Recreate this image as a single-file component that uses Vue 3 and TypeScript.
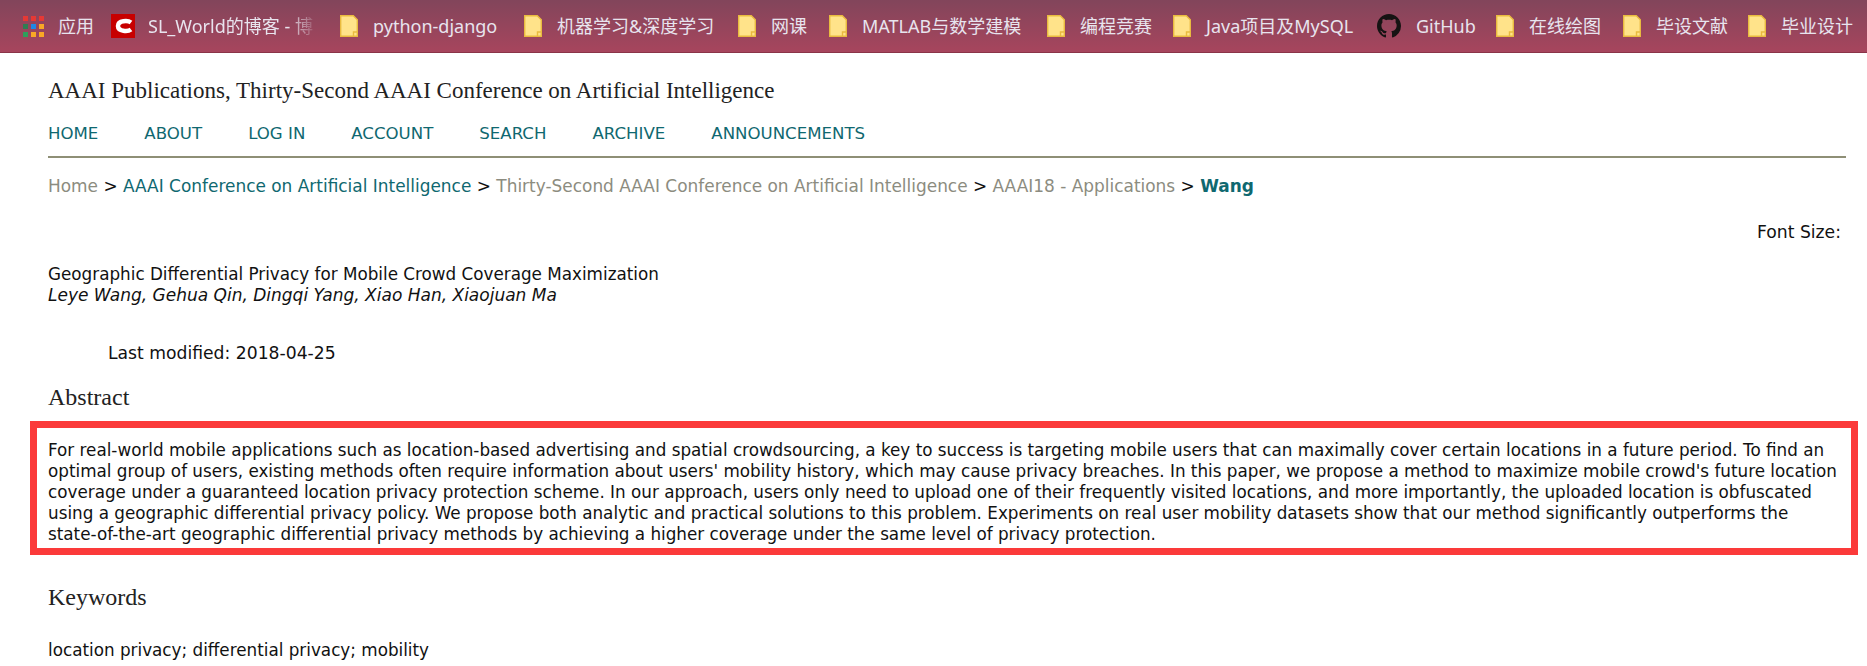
<script setup lang="ts">
interface Bookmark {
  label: string
  icon: 'apps' | 'csdn' | 'folder' | 'github'
  width: number
  faded?: boolean
}

const bookmarks: Bookmark[] = [
  { label: '应用', icon: 'apps', width: 88 },
  { label: 'SL_World的博客 - 博', icon: 'csdn', width: 229, faded: true },
  { label: 'python-django', icon: 'folder', width: 184 },
  { label: '机器学习&深度学习', icon: 'folder', width: 214 },
  { label: '网课', icon: 'folder', width: 91 },
  { label: 'MATLAB与数学建模', icon: 'folder', width: 218 },
  { label: '编程竞赛', icon: 'folder', width: 126 },
  { label: 'Java项目及MySQL', icon: 'folder', width: 204 },
  { label: 'GitHub', icon: 'github', width: 119 },
  { label: '在线绘图', icon: 'folder', width: 127 },
  { label: '毕设文献', icon: 'folder', width: 125 },
  { label: '毕业设计', icon: 'folder', width: 94 }
]

const appColors = ['#e53935', '#e53935', '#e53935', '#2e7d52', '#1e88e5', '#f9a825', '#2e9e5b', '#f9a825', '#f9a825']

const navItems = ['HOME', 'ABOUT', 'LOG IN', 'ACCOUNT', 'SEARCH', 'ARCHIVE', 'ANNOUNCEMENTS']
</script>

<template>
  <div class="page">
    <div class="bookmarks">
      <div
        v-for="b in bookmarks"
        :key="b.label"
        class="bookmark"
        :style="{ width: b.width + 'px' }"
      >
        <span v-if="b.icon === 'apps'" class="apps">
          <i v-for="(c, i) in appColors" :key="i" :style="{ background: c }"></i>
        </span>
        <svg v-else-if="b.icon === 'csdn'" class="icon csdn" width="24" height="24" viewBox="0 0 24 24">
          <rect width="24" height="24" fill="#c70000" />
          <path d="M20 8.500c-3-2.200-13-2.200-13 3.500s10 5.700 13 3.500" fill="none" stroke="#fff" stroke-width="4.500" />
        </svg>
        <svg v-else-if="b.icon === 'folder'" class="icon" width="18" height="22" viewBox="0 0 18 22">
          <path d="M.7.7h12.600l4 4v16.600H.7z" fill="#ffe38a" stroke="#e9bb3f" stroke-width="1.400" />
          <path d="M13.500 21v-4h3.500" fill="#ffe38a" stroke="#e9bb3f" stroke-width="1.400" />
        </svg>
        <svg v-else class="icon" width="24" height="24" viewBox="0 0 16 16">
          <path
            fill="#161313"
            d="M8 0C3.580 0 0 3.580 0 8c0 3.540 2.290 6.530 5.470 7.590.4.070.55-.17.55-.38 0-.19-.01-.82-.01-1.490-2.010.37-2.530-.49-2.690-.94-.09-.23-.48-.94-.82-1.130-.28-.15-.68-.52-.01-.53.630-.01 1.080.58 1.230.82.720 1.210 1.870.87 2.330.66.070-.52.280-.87.510-1.070-1.780-.2-3.640-.89-3.640-3.950 0-.87.310-1.590.82-2.150-.08-.2-.36-1.020.08-2.120 0 0 .67-.21 2.200.82.640-.18 1.320-.27 2-.27s1.360.09 2 .27c1.530-1.040 2.200-.82 2.200-.82.440 1.100.16 1.920.08 2.120.51.560.82 1.270.82 2.150 0 3.070-1.870 3.750-3.650 3.950.29.250.54.730.54 1.480 0 1.070-.01 1.930-.01 2.200 0 .21.150.46.550.38A8.010 8.010 0 0 0 16 8c0-4.420-3.580-8-8-8z"
          />
        </svg>
        <span class="label" :class="{ faded: b.faded }">{{ b.label }}</span>
      </div>
    </div>

    <div class="content">
      <h1 class="site-title">AAAI Publications, Thirty-Second AAAI Conference on Artificial Intelligence</h1>

      <nav class="nav">
        <a v-for="item in navItems" :key="item">{{ item }}</a>
      </nav>

      <div class="crumbs">
        <span class="grey">Home</span> &gt;
        <a>AAAI Conference on Artificial Intelligence</a> &gt;
        <span class="grey">Thirty-Second AAAI Conference on Artificial Intelligence</span> &gt;
        <span class="grey">AAAI18 - Applications</span> &gt;
        <a class="current">Wang</a>
      </div>

      <div class="font-size">Font Size:</div>

      <div class="paper-title">Geographic Differential Privacy for Mobile Crowd Coverage Maximization</div>
      <div class="authors">Leye Wang, Gehua Qin, Dingqi Yang, Xiao Han, Xiaojuan Ma</div>

      <div class="modified">Last modified: 2018-04-25</div>

      <h2 class="heading abstract-heading">Abstract</h2>

      <div class="abstract">
        For real-world mobile applications such as location-based advertising and spatial crowdsourcing, a key to success is targeting mobile users that can maximally cover certain locations in a future period. To find an optimal group of users, existing methods often require information about users' mobility history, which may cause privacy breaches. In this paper, we propose a method to maximize mobile crowd's future location coverage under a guaranteed location privacy protection scheme. In our approach, users only need to upload one of their frequently visited locations, and more importantly, the uploaded location is obfuscated using a geographic differential privacy policy. We propose both analytic and practical solutions to this problem. Experiments on real user mobility datasets show that our method significantly outperforms the <span class="nobreak">state-of-the-art</span> geographic differential privacy methods by achieving a higher coverage under the same level of privacy protection.
      </div>

      <h2 class="heading keywords-heading">Keywords</h2>

      <div class="keywords">location privacy; differential privacy; mobility</div>
    </div>
  </div>
</template>

<style>
html,
body {
  margin: 0;
  background: #fff;
  overflow: hidden;
}
</style>

<style scoped>
.page {
  width: 1867px;
  height: 666px;
  overflow: hidden;
  font-family: 'DejaVu Sans', Verdana, sans-serif;
  font-size: 16.800px;
  line-height: 21px;
  color: #111;
}

.bookmarks {
  height: 53px;
  box-sizing: border-box;
  padding: 0 0 0 23px;
  display: flex;
  align-items: center;
  background: linear-gradient(#82455b, #a7455d);
  border-bottom: 1px solid #8a3448;
}

.bookmark {
  display: flex;
  align-items: center;
  flex: none;
  white-space: nowrap;
}

.icon {
  flex: none;
  margin-right: 15px;
}

.csdn {
  margin-right: 13px;
}

.apps {
  display: grid;
  grid-template-columns: repeat(3, 5px);
  grid-auto-rows: 5px;
  gap: 3px 3px;
  margin-right: 14px;
}

.apps i {
  display: block;
}

.label {
  font-family: 'Noto Sans', 'Noto Sans CJK SC', sans-serif;
  font-size: 18px;
  line-height: 28px;
  color: #e8e4ee;
}

.label.faded {
  width: 170px;
  -webkit-mask-image: linear-gradient(90deg, #000 82%, transparent 100%);
  mask-image: linear-gradient(90deg, #000 82%, transparent 100%);
}

.content {
  padding: 0 21px 0 48px;
}

.site-title {
  margin: 25px 0 0;
  font-family: 'Liberation Serif', 'Times New Roman', serif;
  font-size: 23px;
  font-weight: normal;
  line-height: 26px;
  color: #222;
}

.nav {
  display: flex;
  gap: 46px;
  margin-top: 19px;
  padding-bottom: 12px;
  border-bottom: 2px solid #8e8f76;
  font-size: 16.600px;
}

.nav a {
  color: #0f6870;
}

.crumbs {
  margin-top: 18px;
  font-size: 16.950px;
}

.crumbs a {
  color: #0f6870;
}

.crumbs .grey {
  color: #8c8c80;
}

.crumbs .current {
  font-weight: bold;
}

.font-size {
  margin-top: 25px;
  padding-right: 5px;
  text-align: right;
  font-size: 17.200px;
}

.paper-title {
  margin-top: 21px;
}

.authors {
  font-style: italic;
  font-size: 17px;
}

.modified {
  margin-top: 37px;
  padding-left: 60px;
  font-size: 17.200px;
}

.heading {
  margin: 0;
  font-family: 'Liberation Serif', 'Times New Roman', serif;
  font-size: 24px;
  font-weight: normal;
  line-height: 26px;
  color: #222;
}

.abstract-heading {
  margin-top: 20px;
}

.abstract {
  box-sizing: border-box;
  margin: 11px 0 0 -18px;
  width: 1828px;
  height: 134px;
  padding: 12px 8px 0 11px;
  border: 7px solid #fb3a3a;
}

.nobreak {
  white-space: nowrap;
}

.keywords-heading {
  margin-top: 29px;
}

.keywords {
  margin-top: 30px;
}
</style>
